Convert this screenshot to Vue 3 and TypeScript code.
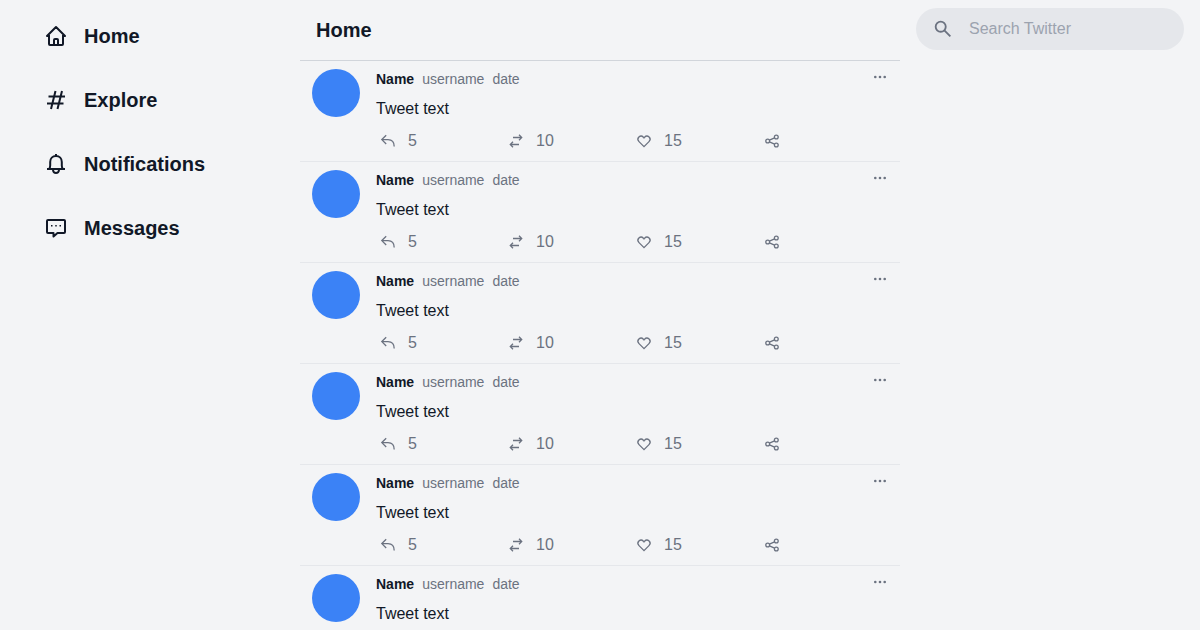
<script setup lang="ts">
import { ref } from 'vue'

interface Tweet {
  id: number
  name: string
  username: string
  date: string
  text: string
  replies: number
  retweets: number
  likes: number
}

const links = ['Home', 'Explore', 'Notifications', 'Messages']
const search = ref('')
const tweets: Tweet[] = Array.from({ length: 6 }, (_, id) => ({
  id,
  name: 'Name',
  username: 'username',
  date: 'date',
  text: 'Tweet text',
  replies: 5,
  retweets: 10,
  likes: 15,
}))
</script>

<template>
  <div class="layout">
    <nav class="sidebar">
      <a v-for="link in links" :key="link" href="#" class="nav-link">
        <svg class="nav-icon" viewBox="0 0 24 24" aria-hidden="true">
          <template v-if="link === 'Home'">
            <path d="M5 12H3l9-9 9 9h-2" />
            <path d="M5 11v9a1 1 0 0 0 1 1h12a1 1 0 0 0 1-1v-9" />
            <path d="M10 21v-5a1 1 0 0 1 1-1h2a1 1 0 0 1 1 1v5" />
          </template>
          <path v-else-if="link === 'Explore'" d="M11.500 3 7 21M18 3l-4.500 18M4.500 8.500H21M3 15.500h16.500" />
          <template v-else-if="link === 'Notifications'">
            <path d="M3 17h18M5 17c1-1 1.200-2.200 1.200-3.500V10c0-3.500 2.300-6 5.800-6s5.800 2.500 5.800 6v3.500c0 1.300.2 2.500 1.200 3.500M12 2v2" />
            <path d="M9 18c.2 2 1.300 3 3 3s2.800-1 3-3" />
          </template>
          <template v-else>
            <path d="M4 4h16a1 1 0 0 1 1 1v11a1 1 0 0 1-1 1h-6.500L9.500 20.500V17H4a1 1 0 0 1-1-1V5a1 1 0 0 1 1-1z" />
            <path class="solid" d="M7 9h1.500v1.500H7zM11.250 9h1.500v1.500h-1.500zM15.500 9H17v1.500h-1.500z" />
          </template>
        </svg>
        <span>{{ link }}</span>
      </a>
    </nav>

    <main class="feed">
      <header class="feed-header"><h1>Home</h1></header>
      <article v-for="tweet in tweets" :key="tweet.id" class="tweet">
        <div class="avatar"></div>
        <div class="body">
          <div class="meta">
            <strong>{{ tweet.name }}</strong>
            <span>{{ tweet.username }}</span>
            <span>{{ tweet.date }}</span>
            <button type="button" class="more" aria-label="More">
              <svg viewBox="0 0 16 16" aria-hidden="true">
                <circle cx="3.300" cy="8" r="1.300" />
                <circle cx="8" cy="8" r="1.300" />
                <circle cx="12.700" cy="8" r="1.300" />
              </svg>
            </button>
          </div>
          <p>{{ tweet.text }}</p>
          <div class="actions">
            <button type="button" aria-label="Reply">
              <svg viewBox="0 0 24 24" aria-hidden="true"><path d="M10.200 6.200 5.800 10.600l4.400 4.400M5.800 10.600h6.200c3.800 0 6.200 2.400 6.200 6.900" /></svg>
              <span>{{ tweet.replies }}</span>
            </button>
            <button type="button" aria-label="Retweet">
              <svg viewBox="0 0 24 24" aria-hidden="true"><path d="M9 8.500h8.500M15 5.800l2.700 2.700-2.700 2.700M15 15.500H6.500M9 12.800l-2.700 2.700L9 18.200" /></svg>
              <span>{{ tweet.retweets }}</span>
            </button>
            <button type="button" aria-label="Like">
              <svg viewBox="0 0 24 24" aria-hidden="true"><path d="M12 17.600 7 12.600C5.600 11.200 5.600 9.300 6.900 8c1.300-1.200 3.300-1.100 4.500.2l.6.7.600-.7c1.200-1.300 3.200-1.400 4.500-.2 1.300 1.300 1.300 3.200-.1 4.600z" /></svg>
              <span>{{ tweet.likes }}</span>
            </button>
            <button type="button" aria-label="Share">
              <svg viewBox="0 0 24 24" aria-hidden="true">
                <circle cx="7.700" cy="12" r="1.900" />
                <circle cx="16.300" cy="8" r="1.900" />
                <circle cx="16.300" cy="16" r="1.900" />
                <path d="M9.400 11.200l5.200-2.400M9.400 12.800l5.200 2.400" />
              </svg>
            </button>
          </div>
        </div>
      </article>
    </main>

    <aside class="aside">
      <label class="search">
        <svg viewBox="0 0 24 24" aria-hidden="true">
          <circle cx="9.500" cy="9.500" r="5.500" />
          <path d="M13.500 13.500l6.500 6.500" />
        </svg>
        <input v-model="search" type="search" placeholder="Search Twitter" aria-label="Search Twitter" />
      </label>
    </aside>
  </div>
</template>

<style>
body {
  background: #f3f4f6;
}
</style>

<style scoped>
.layout {
  display: grid;
  grid-template-columns: minmax(0, 1fr) minmax(0, 2fr) minmax(0, 1fr);
  height: 100vh;
  color: #111827;
  font-family: "Liberation Sans", Arial, sans-serif;
  font-size: 16px;
  line-height: 24px;
}
.sidebar {
  display: flex;
  flex-direction: column;
  align-items: flex-start;
  gap: 16px;
  padding: 12px 32px;
}
.nav-link {
  display: flex;
  align-items: center;
  gap: 16px;
  padding: 10px 12px;
  color: #111827;
  font-size: 20px;
  font-weight: 700;
  line-height: 28px;
  text-decoration: none;
}
svg {
  display: block;
  flex: none;
  fill: none;
  stroke: currentColor;
}
.nav-icon {
  width: 24px;
  height: 24px;
  stroke-width: 2;
  stroke-linejoin: round;
}
.solid {
  fill: currentColor;
  stroke: none;
}
.feed {
  overflow-y: auto;
  scrollbar-width: none;
}
.feed-header {
  padding: 16px;
  border-bottom: 1px solid #d1d5db;
}
h1 {
  margin: 0;
  font-size: 20px;
  line-height: 28px;
}
.tweet {
  display: flex;
  gap: 16px;
  padding: 8px 12px;
  border-bottom: 1px solid #e5e7eb;
}
.avatar {
  flex: none;
  width: 48px;
  height: 48px;
  border-radius: 50%;
  background: #3b82f6;
}
.body {
  flex: 1;
}
.meta {
  display: flex;
  gap: 8px;
  color: #6b7280;
  font-size: 14px;
  line-height: 20px;
}
.meta strong {
  color: #111827;
}
button {
  padding: 0;
  border: 0;
  background: none;
  color: #6b7280;
  font: inherit;
  cursor: pointer;
}
.more {
  align-self: flex-start;
  margin-left: auto;
}
.more svg {
  width: 16px;
  height: 16px;
  fill: currentColor;
  stroke: none;
}
p {
  margin: 8px 0;
}
.actions {
  display: grid;
  grid-template-columns: repeat(4, 1fr);
}
.actions button {
  display: flex;
  align-items: center;
  gap: 8px;
}
.actions svg {
  width: 24px;
  height: 24px;
  stroke-width: 1.3;
}
.aside {
  padding: 8px 16px;
}
.search {
  display: flex;
  align-items: center;
  gap: 15px;
  padding: 8px 16px;
  border-radius: 24px;
  background: #e5e7eb;
  color: #6b7280;
}
.search svg {
  width: 22px;
  height: 22px;
  stroke-width: 2;
}
.search input {
  flex: 1;
  min-width: 0;
  height: 26px;
  padding: 0;
  border: 0;
  outline: 0;
  background: transparent;
  color: #111827;
  font: inherit;
}
.search input::placeholder {
  color: #9ca3af;
}
</style>
